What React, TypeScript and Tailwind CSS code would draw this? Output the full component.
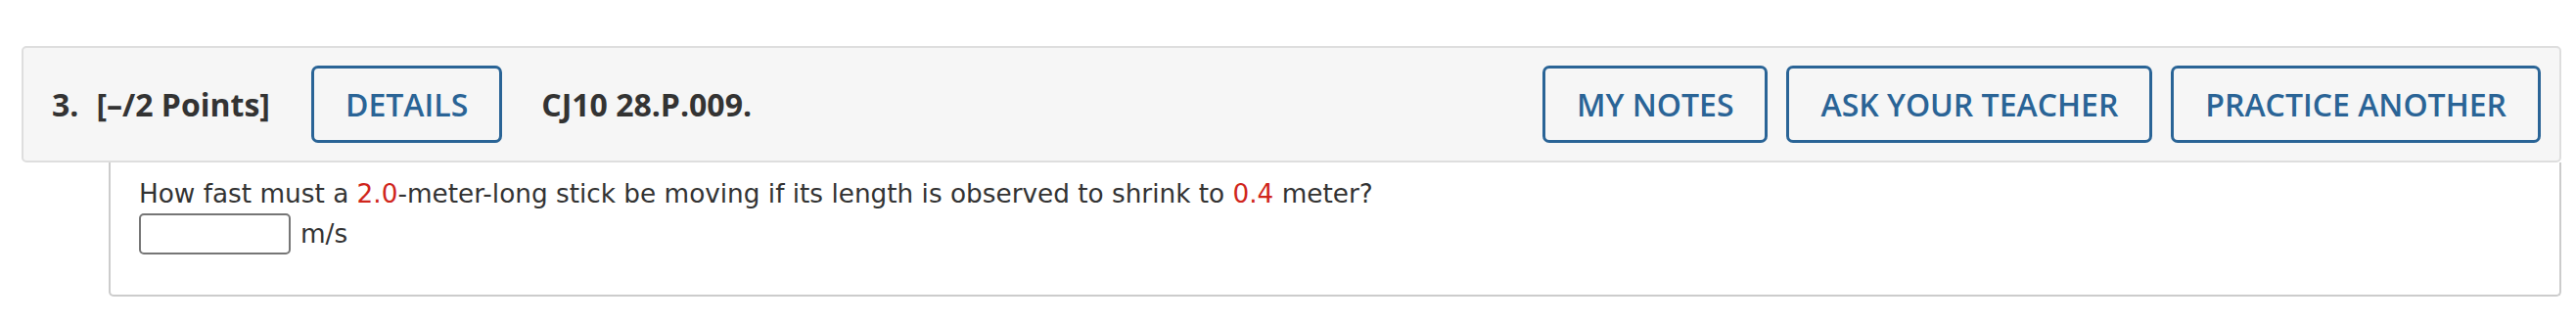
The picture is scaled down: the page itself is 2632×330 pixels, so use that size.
import React from 'react'

function HeadButton({ label }: { label: string }) {
  return (
    <button className="h-[79px] px-[32px] border-[3px] border-[#2a6496] rounded-[7px] text-[#2a6496] text-[32px] font-semibold leading-none bg-transparent whitespace-nowrap">
      {label}
    </button>
  )
}

export default function App() {
  return (
    <div className="w-[2632px] h-[330px] bg-white pt-[47px] pl-[22px] pr-[15px] font-['Open_Sans',sans-serif]">
      <div className="flex items-center h-[119px] bg-[#f6f6f6] border-2 border-[#dedede] rounded-[5px] pl-[29px] pr-[19px]">
        <span className="text-[32px] font-bold text-[#333333] whitespace-nowrap">3.</span>
        <span className="ml-[18px] text-[32px] font-bold text-[#333333] whitespace-nowrap">[–/2 Points]</span>
        <div className="ml-[42px]">
          <HeadButton label="DETAILS" />
        </div>
        <span className="ml-[40px] text-[32px] font-bold text-[#333333] whitespace-nowrap">CJ10 28.P.009.</span>
        <div className="ml-auto flex gap-[19px]">
          <HeadButton label="MY NOTES" />
          <HeadButton label="ASK YOUR TEACHER" />
          <HeadButton label="PRACTICE ANOTHER" />
        </div>
      </div>
      <div className="ml-[89px] h-[137px] border-2 border-t-0 border-[#cccccc] rounded-b-[5px] bg-white pl-[29px] pt-[14px] font-['DejaVu_Sans',Verdana,sans-serif] text-[26.3px] leading-[36px] text-[#333333]">
        <p>
          How fast must a <span className="text-[#d0261c]">2.0</span>-meter-long stick be moving if its length is observed to shrink to <span className="text-[#d0261c]">0.4</span> meter?
        </p>
        <div className="mt-[2px] flex items-center gap-[10px]">
          <input type="text" className="w-[155px] h-[42px] border-2 border-[#767676] rounded-[5px] bg-white" />
          <span>m/s</span>
        </div>
      </div>
    </div>
  )
}
